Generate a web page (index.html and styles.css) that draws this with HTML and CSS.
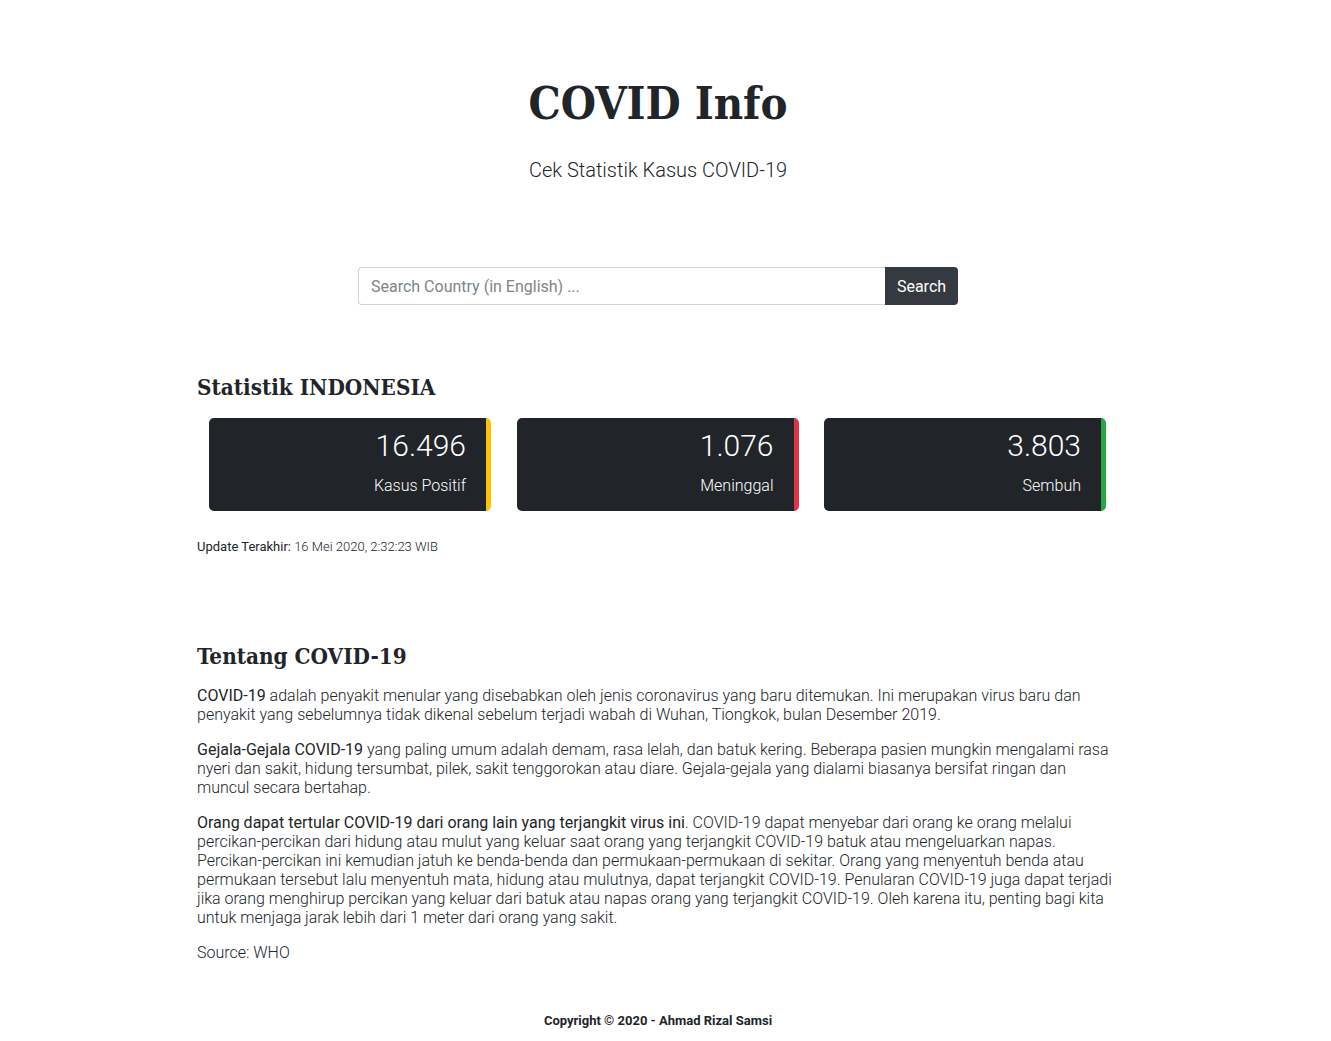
FILE: index.html
```html
<!DOCTYPE html>
<html lang="id">
<head>
<meta charset="utf-8">
<title>COVID Info</title>
<link rel="stylesheet" href="styles.css">
</head>
<body>
<div class="wrap">
  <header class="hero">
    <h1 class="title">COVID Info</h1>
    <p class="lead">Cek Statistik Kasus COVID-19</p>
  </header>

  <form class="search">
    <input class="search-input" type="text" placeholder="Search Country (in English) ...">
    <button class="search-btn" type="button">Search</button>
  </form>

  <main class="container">
    <section class="stats">
      <h3 class="section-title">Statistik INDONESIA</h3>
      <div class="cards">
        <div class="card card-yellow">
          <div class="card-num">16.496</div>
          <div class="card-label">Kasus Positif</div>
        </div>
        <div class="card card-red">
          <div class="card-num">1.076</div>
          <div class="card-label">Meninggal</div>
        </div>
        <div class="card card-green">
          <div class="card-num">3.803</div>
          <div class="card-label">Sembuh</div>
        </div>
      </div>
      <p class="update"><span class="update-key">Update Terakhir:</span> 16 Mei 2020, 2:32:23 WIB</p>
    </section>

    <section class="about">
      <h3 class="section-title">Tentang COVID-19</h3>
      <p><span class="strong">COVID-19</span> adalah penyakit menular yang disebabkan oleh jenis coronavirus yang baru ditemukan. Ini merupakan virus baru dan penyakit yang sebelumnya tidak dikenal sebelum terjadi wabah di Wuhan, Tiongkok, bulan Desember 2019.</p>
      <p><span class="strong">Gejala-Gejala COVID-19</span> yang paling umum adalah demam, rasa lelah, dan batuk kering. Beberapa pasien mungkin mengalami rasa nyeri dan sakit, hidung tersumbat, pilek, sakit tenggorokan atau diare. Gejala-gejala yang dialami biasanya bersifat ringan dan muncul secara bertahap.</p>
      <p><span class="strong">Orang dapat tertular COVID-19 dari orang lain yang terjangkit virus ini</span>. COVID-19 dapat menyebar dari orang ke orang melalui percikan-percikan dari hidung atau mulut yang keluar saat orang yang terjangkit COVID-19 batuk atau mengeluarkan napas. Percikan-percikan ini kemudian jatuh ke benda-benda dan permukaan-permukaan di sekitar. Orang yang menyentuh benda atau permukaan tersebut lalu menyentuh mata, hidung atau mulutnya, dapat terjangkit COVID-19. Penularan COVID-19 juga dapat terjadi jika orang menghirup percikan yang keluar dari batuk atau napas orang yang terjangkit COVID-19. Oleh karena itu, penting bagi kita untuk menjaga jarak lebih dari 1 meter dari orang yang sakit.</p>
      <p>Source: WHO</p>
    </section>
  </main>

  <footer class="footer">Copyright © 2020 - Ahmad Rizal Samsi</footer>
</div>
</body>
</html>
```

FILE: styles.css
```css
* { box-sizing: border-box; }

body {
  margin: 0;
  background: #fff;
  color: #212529;
  font-family: Roboto, "Liberation Sans", sans-serif;
  font-weight: 300;
  font-size: 16px;
  line-height: 1.2;
}

.wrap {
  width: 1316px;
  padding-bottom: 10px;
}

.hero {
  padding-top: 76px;
  text-align: center;
}

.title {
  margin: 0;
  font-family: "DejaVu Serif Condensed", "DejaVu Serif", serif;
  font-stretch: condensed;
  font-weight: 700;
  font-size: 45px;
  line-height: 56px;
  color: #212529;
}

.lead {
  margin: 23px 0 0;
  font-size: 20px;
  line-height: 30px;
  font-weight: 300;
}

.search {
  display: flex;
  width: 600px;
  height: 38px;
  margin: 82px auto 0;
}

.search-input {
  flex: 1;
  min-width: 0;
  height: 38px;
  padding: 0 12px;
  border: 1px solid #ced4da;
  border-right: 0;
  border-radius: 4px 0 0 4px;
  font-family: Roboto, sans-serif;
  font-weight: 400;
  font-size: 16px;
  color: #495057;
  outline: none;
}

.search-input::placeholder {
  color: #7d848b;
  opacity: 1;
}

.search-btn {
  width: 73px;
  height: 38px;
  padding: 0;
  border: 0;
  border-radius: 0 4px 4px 0;
  background: #343a40;
  color: #fff;
  font-family: Roboto, sans-serif;
  font-weight: 400;
  font-size: 16px;
}

.container {
  width: 922px;
  margin: 0 auto;
}

.stats {
  padding-top: 65px;
}

.section-title {
  margin: 0;
  font-family: "DejaVu Serif Condensed", "DejaVu Serif", serif;
  font-stretch: condensed;
  font-weight: 700;
  font-size: 22.3px;
  line-height: 34px;
}

.cards {
  display: grid;
  grid-template-columns: repeat(3, 282px);
  column-gap: 25.5px;
  padding-left: 12px;
  margin-top: 14px;
}

.card {
  height: 93px;
  padding: 9px 20px 14px;
  background: #212529;
  color: #fff;
  border-radius: 5px;
  border-right: 5px solid #ffc107;
  text-align: right;
}

.card-red { border-right-color: #dc3545; }
.card-green { border-right-color: #28a745; }

.card-num {
  font-size: 30px;
  line-height: 38px;
  font-weight: 300;
}

.card-label {
  margin-top: 9px;
  font-size: 16px;
  line-height: 24px;
  font-weight: 300;
}

.update {
  margin: 26px 0 0;
  font-size: 13px;
  line-height: 19px;
  font-weight: 300;
}

.update-key {
  font-weight: 400;
}

.about {
  padding-top: 83px;
}

.about .section-title {
  margin-bottom: 13px;
}

.about p {
  margin: 0 0 16px;
  font-size: 16px;
  line-height: 19px;
}

.about p:last-child {
  margin-bottom: 0;
}

.strong {
  font-weight: 400;
}

.footer {
  margin-top: 49px;
  text-align: center;
  font-size: 13px;
  line-height: 19px;
  font-weight: 700;
}
```
